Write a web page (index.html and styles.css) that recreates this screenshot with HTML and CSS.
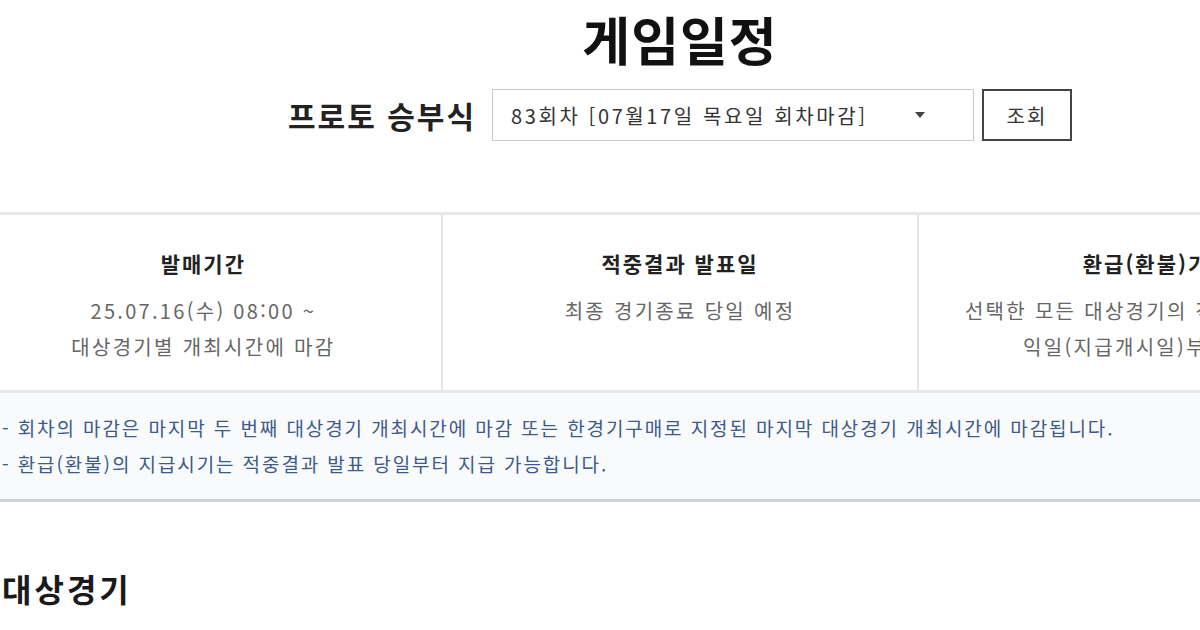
FILE: index.html
```html
<!DOCTYPE html>
<html lang="ko">
  <head>
    <meta charset="UTF-8" />
    <meta name="viewport" content="width=device-width, initial-scale=1.0" />
    <title>게임일정</title>
    <link rel="stylesheet" href="styles.css">
  </head>
  <body>
    <div class="page">
      <h1 class="title">게임일정</h1>

      <div class="search">
        <span class="search-label">프로토 승부식</span>
        <div class="select">
          <span>83회차 [07월17일 목요일 회차마감]</span>
          <span class="arrow"></span>
        </div>
        <button class="btn">조회</button>
      </div>

      <div class="info">
        <div class="info-col">
          <h3>발매기간</h3>
          <p>25.07.16(수) 08:00 ~<br />대상경기별 개최시간에 마감</p>
        </div>
        <div class="info-col">
          <h3>적중결과 발표일</h3>
          <p>최종 경기종료 당일 예정</p>
        </div>
        <div class="info-col">
          <h3>환급(환불)기간</h3>
          <p>선택한 모든 대상경기의 적중결과 발표일<br />익일(지급개시일)부터 1년간</p>
        </div>
      </div>

      <div class="notice">
        <p>- 회차의 마감은 마지막 두 번째 대상경기 개최시간에 마감 또는 한경기구매로 지정된 마지막 대상경기 개최시간에 마감됩니다.</p>
        <p>- 환급(환불)의 지급시기는 적중결과 발표 당일부터 지급 가능합니다.</p>
      </div>

      <h2 class="section-title">대상경기</h2>
    </div>
  </body>
</html>
```

FILE: styles.css
```css
* {
  margin: 0;
  padding: 0;
  box-sizing: border-box;
}

html,
body {
  overflow: hidden;
}

body {
  font-family: "Noto Sans CJK KR", "Noto Sans", sans-serif;
  background-color: #ffffff;
  color: #222;
  width: 1200px;
  height: 630px;
}

.page {
  width: 1428px;
  margin-left: -34px;
}

.title {
  text-align: center;
  font-size: 52px;
  font-weight: 700;
  line-height: 60px;
  margin-top: 9px;
  color: #111;
  letter-spacing: 1px;
}

.search {
  display: flex;
  justify-content: center;
  align-items: center;
  margin-top: 20px;
  height: 52px;
}

.search-label {
  font-size: 30px;
  font-weight: 700;
  color: #222;
  margin-right: 16px;
  letter-spacing: 2px;
  white-space: nowrap;
}

.select {
  width: 482px;
  height: 52px;
  border: 1px solid #c9c9c9;
  display: flex;
  align-items: center;
  justify-content: space-between;
  padding: 0 48px 0 18px;
  font-size: 20px;
  color: #333;
  letter-spacing: 2.6px;
  white-space: nowrap;
}

.arrow {
  width: 0;
  height: 0;
  border-left: 5px solid transparent;
  border-right: 5px solid transparent;
  border-top: 6px solid #444;
}

.btn {
  width: 90px;
  height: 52px;
  margin-left: 8px;
  border: 2px solid #444;
  background-color: #fff;
  font-family: inherit;
  font-size: 20px;
  letter-spacing: 2px;
  color: #333;
}

.info {
  display: flex;
  margin-top: 71px;
  border-top: 3px solid #e8e8e8;
  border-bottom: 3px solid #e8e8e8;
  height: 181px;
}

.info-col {
  flex: 1;
  text-align: center;
  padding-top: 33px;
  border-left: 2px solid #e6e6e6;
  white-space: nowrap;
}

.info-col:first-child {
  border-left: none;
}

.info-col h3 {
  font-size: 21px;
  font-weight: 700;
  color: #222;
  line-height: 30px;
  letter-spacing: 2px;
}

.info-col p {
  margin-top: 15px;
  font-size: 20px;
  line-height: 36px;
  color: #666;
  letter-spacing: 2.3px;
}

.notice {
  background-color: #f8fafc;
  border-bottom: 3px solid #cfd4d9;
  padding: 17px 0 19px 36px;
  height: 109px;
}

.notice p {
  font-size: 19px;
  line-height: 36px;
  color: #3d5a88;
  letter-spacing: 1.9px;
  white-space: nowrap;
}

.section-title {
  margin-top: 64px;
  padding-left: 36px;
  font-size: 32px;
  font-weight: 700;
  color: #1a1a1a;
  line-height: 44px;
  letter-spacing: 3px;
}
```
